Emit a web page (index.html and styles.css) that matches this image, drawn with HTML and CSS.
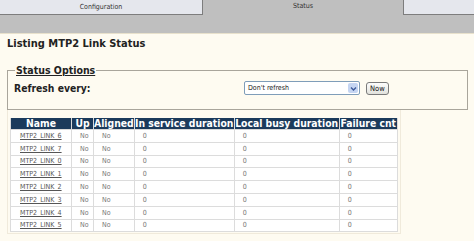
FILE: index.html
```html
<!DOCTYPE html>
<html>
<head>
<meta charset="utf-8">
<title>MTP2 Link Status</title>
<link rel="stylesheet" href="styles.css">
</head>
<body>
<div class="tabs">
  <div class="tab">Configuration</div>
  <div class="tab active">Status</div>
  <div class="tab last"></div>
</div>
<div class="page">
  <h2 class="title">Listing MTP2 Link Status</h2>
  <fieldset class="options">
    <legend>Status Options</legend>
    <div class="refresh">
      <span class="refresh-label">Refresh every:</span>
      <div class="select">
        <span class="select-text">Don't refresh</span>
        <span class="select-arrow"><svg width="9" height="9" viewBox="0 0 9 9"><path d="M2 3.5 L4.5 6 L7 3.5" fill="none" stroke="#3c5a9a" stroke-width="1.4"/></svg></span>
      </div>
      <button class="btn" type="button">Now</button>
    </div>
  </fieldset>
  <div class="listing">
    <table class="links">
      <thead>
        <tr><th class="c-name">Name</th><th class="c-up">Up</th><th class="c-al">Aligned</th><th class="c-in">In service duration</th><th class="c-lb">Local busy duration</th><th class="c-fc">Failure cnt</th></tr>
      </thead>
      <tbody>
        <tr><td><a href="#">MTP2_LINK_6</a></td><td>No</td><td>No</td><td>0</td><td>0</td><td>0</td></tr>
        <tr><td><a href="#">MTP2_LINK_7</a></td><td>No</td><td>No</td><td>0</td><td>0</td><td>0</td></tr>
        <tr><td><a href="#">MTP2_LINK_0</a></td><td>No</td><td>No</td><td>0</td><td>0</td><td>0</td></tr>
        <tr><td><a href="#">MTP2_LINK_1</a></td><td>No</td><td>No</td><td>0</td><td>0</td><td>0</td></tr>
        <tr><td><a href="#">MTP2_LINK_2</a></td><td>No</td><td>No</td><td>0</td><td>0</td><td>0</td></tr>
        <tr><td><a href="#">MTP2_LINK_3</a></td><td>No</td><td>No</td><td>0</td><td>0</td><td>0</td></tr>
        <tr><td><a href="#">MTP2_LINK_4</a></td><td>No</td><td>No</td><td>0</td><td>0</td><td>0</td></tr>
        <tr><td><a href="#">MTP2_LINK_5</a></td><td>No</td><td>No</td><td>0</td><td>0</td><td>0</td></tr>
      </tbody>
    </table>
  </div>
</div>
</body>
</html>
```

FILE: styles.css
```css
html, body {
	margin: 0;
	padding: 0;
}
body {
	background-color: #fefbf1;
	font-family: "DejaVu Sans Condensed", "DejaVu Sans", sans-serif;
	color: #333;
	width: 474px;
	height: 241px;
	overflow: hidden;
}
div.tabs {
	display: flex;
	align-items: flex-start;
	height: 33px;
	background-color: #bfbfbf;
	border-bottom: 1px solid #e8e1cc;
}
div.tab {
	height: 14px;
	line-height: 15px;
	font-size: 7px;
	text-align: center;
	color: #333;
	background-color: #e5e7ed;
	border-right: 1px solid #7d7d7d;
	border-bottom: 1px solid #7d7d7d;
	box-sizing: content-box;
}
div.tab:first-child {
	width: 202px;
}
div.tab.active {
	width: 200px;
	background-color: transparent;
	border: none;
	line-height: 13px;
}
div.tab.last {
	flex: 1;
	border-right: none;
	border-left: 1px solid #7d7d7d;
}
div.page {
	padding: 0 7px;
}
h2.title {
	margin: 3px 0 0 0;
	font-size: 11px;
	line-height: 14px;
	color: #222;
}
fieldset.options {
	margin: 14px 0 0 0;
	padding: 0 6px 14px 6px;
	border: 1px solid #a9a59b;
	width: 461px;
	box-sizing: border-box;
}
fieldset.options legend {
	padding: 0 1px;
	margin-left: 1px;
	font-size: 10.5px;
	font-weight: bold;
	text-decoration: underline;
	color: #222;
	line-height: 11px;
}
div.refresh {
	display: flex;
	align-items: center;
	margin-top: 5px;
}
span.refresh-label {
	font-size: 10.3px;
	font-weight: bold;
	color: #222;
	width: 230px;
}
div.select {
	display: flex;
	align-items: center;
	justify-content: space-between;
	width: 111px;
	height: 12px;
	border: 1px solid #7f9db9;
	border-radius: 2px;
	background-color: #fff;
	font-size: 7px;
	color: #222;
	padding-left: 3px;
	box-sizing: content-box;
}
span.select-arrow {
	display: flex;
	align-items: center;
	justify-content: center;
	width: 10px;
	height: 10px;
	margin-right: 1px;
	border-radius: 2px;
	background-color: #c5d5f2;
}
button.btn {
	margin-left: 6px;
	height: 13px;
	padding: 0 3px;
	font-family: inherit;
	font-size: 7.5px;
	color: #222;
	border: 1px solid #7a7a7a;
	border-radius: 3px;
	background: linear-gradient(#fdfdfd, #e2e2dc);
}
div.listing {
	margin-top: 0;
	width: 394px;
	padding: 8px 0 1px 2px;
	border: 1px solid #f0eadb;
	border-top: none;
	box-sizing: border-box;
}
table.links {
	border-collapse: collapse;
	background-color: #fff;
	font-size: 7px;
	color: #777;
}
table.links th {
	background-color: #1b3a5b;
	color: #fff;
	font-size: 10.3px;
	font-weight: bold;
	height: 11px;
	line-height: 11px;
	padding: 0;
	border: 1px solid #d9d9d9;
	border-top: none;
	white-space: nowrap;
}
table.links td {
	height: 11.8px;
	padding: 0 0 0 8px;
	border: 1px solid #dcdcdc;
	text-align: left;
	color: #777;
}
table.links td:first-child {
	padding-left: 9px;
}
table.links a {
	color: #555;
}
th.c-name { width: 60px; }
th.c-up { width: 21px; }
th.c-al { width: 39px; }
th.c-in { width: 99px; }
th.c-lb { width: 104px; }
th.c-fc { width: 57px; }
```
